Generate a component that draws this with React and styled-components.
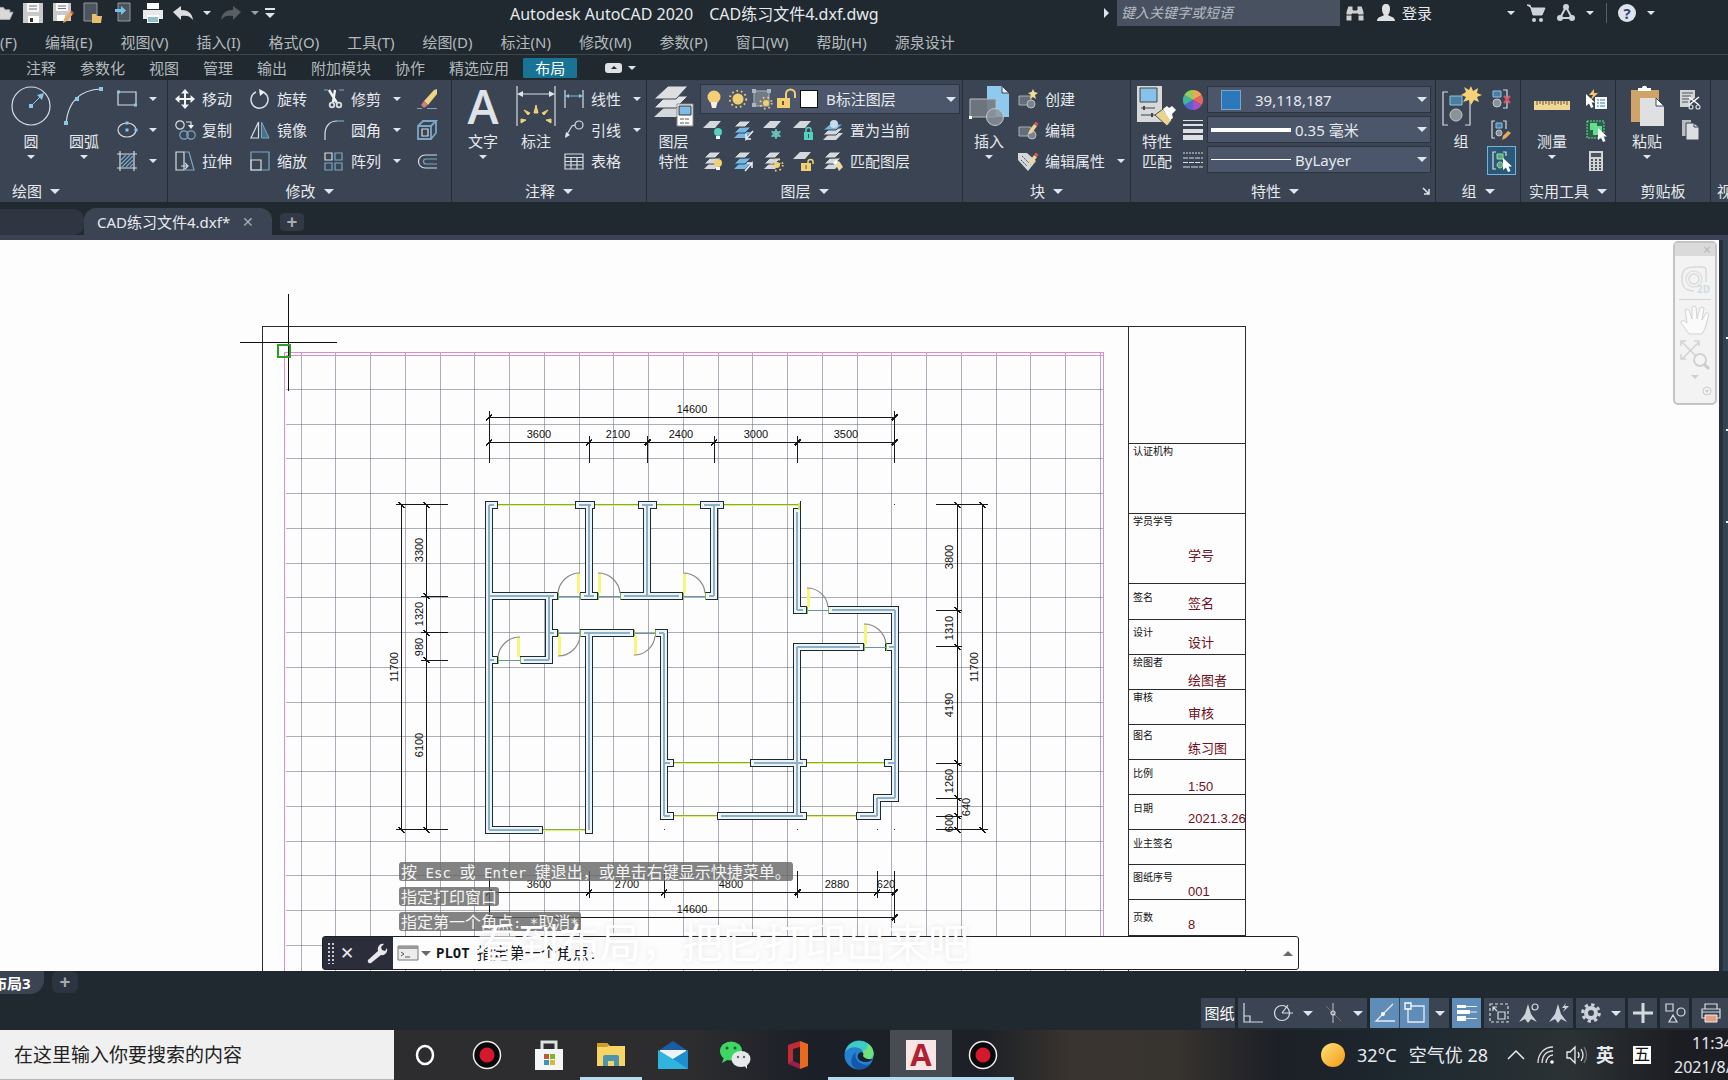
import styled, { createGlobalStyle } from "styled-components";

const App = () => {
  return (
    <Page>
      <GlobalStyle />
      <TitleBar />
      <MenuBar>
        {menus.map((item) => (
          <MenuItem key={item}>{item}</MenuItem>
        ))}
      </MenuBar>
      <RibbonTabs />
      <Ribbon />
      <FileTabs />
      <Workspace />
      <LayoutTabs />
      <StatusBar />
      <Taskbar />
    </Page>
  );
};

export default App;

//Data
const menus = [
  "(F)",
  "编辑(E)",
  "视图(V)",
  "插入(I)",
  "格式(O)",
  "工具(T)",
  "绘图(D)",
  "标注(N)",
  "修改(M)",
  "参数(P)",
  "窗口(W)",
  "帮助(H)",
  "源泉设计",
];

const ribbonTabs = [
  "注释",
  "参数化",
  "视图",
  "管理",
  "输出",
  "附加模块",
  "协作",
  "精选应用",
  "布局",
];

const titleRows = [
  { label: "认证机构", labelY: 455, bottom: 513 },
  { label: "学员学号", labelY: 525, value: "学号", valueY: 560, bottom: 583 },
  { label: "签名", labelY: 601, value: "签名", valueY: 608, bottom: 619 },
  { label: "设计", labelY: 636, value: "设计", valueY: 647, bottom: 654 },
  { label: "绘图者", labelY: 666, value: "绘图者", valueY: 685, bottom: 689 },
  { label: "审核", labelY: 701, value: "审核", valueY: 718, bottom: 724 },
  { label: "图名", labelY: 739, value: "练习图", valueY: 753, bottom: 759 },
  { label: "比例", labelY: 777, value: "1:50", valueY: 791, bottom: 794 },
  { label: "日期", labelY: 812, value: "2021.3.26", valueY: 823, bottom: 829 },
  { label: "业主签名", labelY: 847, bottom: 864 },
  { label: "图纸序号", labelY: 881, value: "001", valueY: 896, bottom: 899 },
  { label: "页数", labelY: 921, value: "8", valueY: 929, bottom: 935 },
];

// wall centre lines: x1, y1, x2, y2
const walls = [
  [489, 505, 494, 505],
  [579, 505, 591, 505],
  [642, 505, 653, 505],
  [704, 505, 720, 505],
  [489, 505, 489, 830],
  [589, 505, 589, 596],
  [647, 505, 647, 596],
  [714, 505, 714, 596],
  [797, 512, 797, 610],
  [489, 596, 554, 596],
  [584, 596, 594, 596],
  [624, 596, 679, 596],
  [709, 596, 714, 596],
  [549, 596, 549, 660],
  [489, 660, 494, 660],
  [524, 660, 549, 660],
  [549, 633, 554, 633],
  [584, 633, 630, 633],
  [659, 633, 664, 633],
  [589, 633, 589, 830],
  [664, 633, 664, 816],
  [664, 763, 670, 763],
  [754, 763, 803, 763],
  [888, 763, 895, 763],
  [664, 816, 670, 816],
  [721, 816, 803, 816],
  [860, 816, 877, 816],
  [797, 647, 797, 816],
  [797, 610, 803, 610],
  [832, 610, 895, 610],
  [895, 610, 895, 798],
  [797, 647, 860, 647],
  [889, 647, 895, 647],
  [877, 798, 895, 798],
  [877, 798, 877, 816],
  [489, 830, 539, 830],
];

const wallWindows = [
  [498, 505, 575],
  [595, 505, 638],
  [657, 505, 700],
  [724, 505, 798],
  [674, 763, 750],
  [807, 763, 884],
  [674, 816, 717],
  [807, 816, 856],
  [543, 830, 586],
];

// opening left, opening right, wall y, hinge side, swing direction
const doors = [
  [558, 580, 596, "right", -1],
  [598, 620, 596, "left", -1],
  [683, 705, 596, "left", -1],
  [807, 828, 610, "left", -1],
  [864, 886, 647, "left", -1],
  [498, 520, 660, "right", -1],
  [558, 580, 633, "left", 1],
  [634, 655, 633, "left", 1],
];

const horizontalTexts = [
  ["14600", 692, 413],
  ["3600", 539, 438],
  ["2100", 618, 438],
  ["2400", 681, 438],
  ["3000", 756, 438],
  ["3500", 846, 438],
  ["3600", 539, 888],
  ["2700", 627, 888],
  ["4800", 731, 888],
  ["2880", 837, 888],
  ["620", 886, 888],
  ["14600", 692, 913],
];

const verticalTexts = [
  ["3300", 423, 550],
  ["1320", 423, 614],
  ["980", 423, 647],
  ["6100", 423, 745],
  ["11700", 398, 667],
  ["3800", 953, 557],
  ["1310", 953, 628],
  ["4190", 953, 705],
  ["1260", 953, 781],
  ["640", 970, 807],
  ["600", 953, 823],
  ["11700", 978, 667],
];

const range = (start, count) =>
  Array.from({ length: count }, (_, i) => start + i * 34.75);

//Icons
const sheet = (y, fill = "#d5d9dd") => (
  <path d={`M7 ${y}H18L12 ${y + 6}H1Z`} fill={fill} />
);
const stack = (fill) => (
  <>
    {sheet(12, fill)}
    <path d="M7 7H18L12 13H1Z" fill={fill || "#d5d9dd"} stroke="#3b4452" />
    <path d="M7 1H18L12 7H1Z" fill="#d5d9dd" stroke="#3b4452" />
  </>
);
const bulb = (fill) => (
  <>
    <circle cx="15" cy="12" r="4" fill={fill} />
    <path d="M13 16h4v3h-4z" fill="#f2f4f5" />
  </>
);
const sun = (cx, cy, r, fill = "#f3cf73") => (
  <>
    <circle cx={cx} cy={cy} r={r} fill={fill} />
    <circle
      cx={cx}
      cy={cy}
      r={r + 2.7}
      fill="none"
      stroke={fill}
      strokeWidth="1.8"
      strokeDasharray="1.6 3"
    />
  </>
);
const pencil = (
  <>
    <path d="M11 11L16 4l3 2-5 7-3 1z" fill="#eed49a" />
    <path d="M16 4l1.500-2.500 3 2L19 6z" fill="#d4564e" />
  </>
);
const pointer = "M0 0V12L3 9.500 5 14 7.500 13 5.500 8.500H9Z";
const ln = { fill: "none", stroke: "#d5dce3", strokeWidth: 1.2 };
const blue = { fill: "none", stroke: "#7aa7c7", strokeWidth: 1.2 };
const dot = (x, y) => (
  <rect x={x - 1.5} y={y - 1.5} width="3" height="3" fill="#8cc4ea" />
);

const glyphs = {
  folder: (
    <path d="M0 3h8l2 3h6v3h4l-4 9H0z" fill="#d9d9d9" stroke="#b4b4b4" />
  ),
  save: (
    <>
      <path d="M0 0h20v20H0z" fill="#c9c9c9" />
      <path d="M4 0h12v9H4z" fill="#f7f7f7" />
      <path d="M6 3h8M6 6h8" stroke="#777" />
      <path d="M5 13h11v7H5z" fill="#fff" />
      <path d="M7 15h3v4H7z" fill="#333" />
    </>
  ),
  saveAs: (
    <>
      <path d="M0 0h18v18H0z" fill="#c9c9c9" />
      <path d="M3 0h12v8H3z" fill="#f7f7f7" />
      <path d="M5 3h8M5 5.500h8" stroke="#777" />
      <path d="M4 12h8v6H4z" fill="#fff" />
      <path d="M10 20l1-4 6-7 3 2-6 7z" fill="#e9a961" />
      <path d="M17 9l1.500-1.500L21 10l-1 1z" fill="#d4564e" />
    </>
  ),
  openFile: (
    <>
      <path d="M1 0h13v18H1z" fill="#4d555c" stroke="#93999e" />
      <path d="M9 11h4l1 2h5l-1 7H9z" fill="#e8bf6c" />
    </>
  ),
  importFile: (
    <>
      <path d="M5 0h12v18H5z" fill="#4d555c" stroke="#93999e" />
      <path d="M2 6h6V3l5 4.500L8 12V9H2z" fill="#7cc0ec" />
    </>
  ),
  printer: (
    <>
      <path d="M4 0h12v6H4z" fill="#fff" />
      <path d="M0 7h20v9H0z" fill="#e9e9e9" />
      <path d="M4 12h12v8H4z" fill="#fff" />
      <path d="M5 14h10v5H5z" fill="#90bfcb" />
    </>
  ),
  undo: <path d="M0 9L8 3v4c7 0 11 3 12 10-3-4-6-5-12-4v4z" fill="#dcdee0" />,
  redo: <path d="M20 9L12 3v4C5 7 1 10 0 17c3-4 6-5 12-4v4z" fill="#575e64" />,
  binoculars: (
    <path
      d="M3 3h5v4h4V3h5l2 6v9h-6v-7H7v7H1V9zM1 12h6M13 12h6"
      fill="#cdd0d2"
      stroke="#20292f"
    />
  ),
  user: (
    <path
      d="M10 1c3 0 4 2 4 5s-1 5-2 6c3 2 7 2 7 6H1c0-4 4-4 7-6-1-1-2-3-2-6s1-5 4-5z"
      fill="#e0e1e3"
    />
  ),
  cart: (
    <>
      <path d="M1 2h3l3 10h9l3-7H6z" fill="#cdd2df" stroke="#cdd2df" />
      <circle cx="8" cy="17" r="2" fill="#cdd2df" />
      <circle cx="15" cy="17" r="2" fill="#cdd2df" />
    </>
  ),
  share: (
    <>
      <path d="M10 4L4 15h12z" fill="none" stroke="#cdd2df" strokeWidth="2" />
      <circle cx="10" cy="4" r="3" fill="#cdd2df" />
      <circle cx="4" cy="15" r="3" fill="#cdd2df" />
      <circle cx="16" cy="15" r="3" fill="#cdd2df" />
    </>
  ),
  circle: (
    <>
      <circle cx="20" cy="20" r="19" {...ln} />
      <path d="M20 20L31 9" stroke="#8cc4ea" />
      <path d="M33 7l-2 7-5-5z" fill="#8cc4ea" />
      <rect x="18" y="18" width="4" height="4" fill="#8cc4ea" />
    </>
  ),
  arc: (
    <>
      <path d="M2 37C4 18 14 4 37 3" {...ln} />
      <rect x="0" y="35" width="4" height="4" fill="#8cc4ea" />
      <rect x="11" y="11" width="4" height="4" fill="#8cc4ea" />
      <rect x="35" y="1" width="4" height="4" fill="#8cc4ea" />
    </>
  ),
  rect: (
    <>
      <path d="M1 3h18v13H1z" {...ln} />
      {dot(1.5, 3)}
      {dot(18.5, 16)}
    </>
  ),
  ellipse: (
    <>
      <ellipse cx="10" cy="10" rx="9" ry="7" {...ln} />
      {dot(10, 10)}
      {dot(19, 10)}
      {dot(10, 3)}
    </>
  ),
  hatch: (
    <>
      <path d="M3 0v20M17 0v20M0 3h20M0 17h20" {...ln} />
      <path d="M4 9l5-5M4 13l9-9M5 16L16 5M9 16l7-7M13 16l3-3" {...blue} />
    </>
  ),
  move: (
    <path
      d="M10 0l4 4.500h-3V9h4.500V6L20 10l-4.500 4v-3H11v4.500h3L10 20l-4-4.500h3V11H4.500v3L0 10l4.500-4v3H9V4.500H6z"
      fill="#f0f3f6"
    />
  ),
  rotate: (
    <>
      <path d="M14 3.500A8.500 8.500 0 1 1 6 3" {...ln} strokeWidth="1.5" />
      <path d="M9 0l6 3-5 4z" fill="#f0f3f6" />
    </>
  ),
  trim: (
    <>
      <path d="M0 1h4M15 1h5" {...blue} />
      <path d="M5 1l8 13M11 1L9 13" stroke="#f0f3f6" strokeWidth="2.400" />
      <circle cx="15" cy="16" r="2.300" {...ln} strokeWidth="1.800" />
      <circle cx="8" cy="16" r="2.300" {...ln} strokeWidth="1.800" />
    </>
  ),
  erase: (
    <>
      <path d="M0 19.500h5M10 19.500h10" {...blue} />
      <path d="M7 12L17 1l3-1v5L11 16z" fill="#f0d385" />
      <path d="M7 12l4 4-4 3-3-3z" fill="#d97880" />
    </>
  ),
  copy: (
    <>
      <circle cx="5" cy="5" r="4.200" {...ln} />
      <circle cx="9" cy="15" r="4.200" {...blue} />
      <circle cx="16" cy="15" r="4.200" {...blue} />
      <path d="M11 2h5v4" {...ln} />
      <path d="M13 5h6l-3 4z" fill="#f0f3f6" />
    </>
  ),
  mirror: (
    <>
      <path d="M8.500 2v16H1z" {...ln} />
      <path d="M11.500 2v16H19z" fill="#477089" stroke="#7aa7c7" />
    </>
  ),
  fillet: (
    <>
      <path d="M1 20v-6C1 6 6 1 13 1" {...ln} />
      <path d="M13 1h7" {...blue} />
    </>
  ),
  explode: (
    <>
      <path d="M1 6h13v13H1zM1 6l5-5h13l-5 5M19 1v12l-5 6" {...blue} strokeWidth="1.8" />
      <path d="M5 9h6v7H5z" {...ln} />
    </>
  ),
  stretch: (
    <>
      <path d="M1 1h8v18H1z" {...ln} />
      <path d="M9 1h5l5 18H9" {...blue} />
      <path d="M6 15h6M10 12l3 3-3 3" {...ln} />
    </>
  ),
  scale: (
    <>
      <path d="M1 1h18v18H1z" {...blue} />
      <path d="M1 9h10v10H1z" {...ln} />
    </>
  ),
  array: (
    <>
      <path d="M1 2h7v7H1z" {...ln} />
      <path d="M11 2h7v7h-7zM1 12h7v7H1zM11 12h7v7h-7z" {...blue} />
    </>
  ),
  offset: (
    <>
      <path d="M20 4H8a6 6 0 0 0 0 13h12" {...ln} />
      <path d="M20 8H9a2.500 2.500 0 0 0 0 5h11" {...blue} />
    </>
  ),
  letterA: (
    <text x="20" y="38" fontSize="47" fontFamily="Open Sans" fontWeight="600" textAnchor="middle" fill="#dfe3e8">
      A
    </text>
  ),
  dimension: (
    <>
      <path d="M1 0v40M39 0v40M3 8h34" {...ln} />
      <path d="M1 8l6-3v6zM39 8l-6-3v6z" fill="#e0e5ea" />
      <path d="M18 27l2-8 2 8zM12 29l-4-5 6 3zM28 29l4-5-6 3zM10 34l-5-1v4zM30 34l5-1v4z" fill="#edd27b" stroke="#edd27b" />
    </>
  ),
  linear: (
    <>
      <path d="M1 1v18M19 1v18" {...ln} />
      <path d="M3 7h14" {...blue} />
      <path d="M1 7l4-2v4zM19 7l-4-2v4z" fill="#8cc4ea" />
    </>
  ),
  leader: (
    <>
      <circle cx="15" cy="5" r="4" {...ln} />
      <path d="M11 5L8 6 2 16" {...ln} />
      <path d="M1 18l1-6 4 3z" fill="#e0e5ea" />
    </>
  ),
  table: <path d="M1 3h18v15H1zM1 6.500h18M1 10.500h18M1 14h18M7 6v12M13 6v12" {...ln} />,
  layers: (
    <>
      <path d="M12 20h22L22 31H0z" fill="#d5d8db" />
      <path d="M12 10h22L22 22H0z" fill="#e0e2e4" stroke="#3b4452" />
      <path d="M14 0h20L22 13H0z" fill="#dcdee0" stroke="#3b4452" />
      <path d="M23 18h16v22H23z" fill="#fff" stroke="#888" />
      <path d="M25 20h12v9H25z" fill="#80bce8" stroke="#333" />
      <path d="M26 33h10M26 37h10" stroke="#555" strokeDasharray="4 1" />
    </>
  ),
  bulb: (
    <>
      <circle cx="10" cy="8" r="6.500" fill="#f5cf76" />
      <path d="M6.500 13h7l-1.500 6h-4z" fill="#f6f1e4" />
    </>
  ),
  sun: sun(10, 10, 5.5),
  vpFreeze: (
    <>
      <path d="M2 2h15v15H2z" fill="#717b88" stroke="#adb4bc" />
      <path d="M0 0h4v4H0zM15 0h4v4h-4zM0 14h4v4H0z" fill="#adb4bc" />
      {sun(14, 14, 3)}
    </>
  ),
  unlock: (
    <>
      <path d="M10 10V5a4 4 0 0 1 9 0v4" fill="none" stroke="#f3cf73" strokeWidth="2" />
      <path d="M1 9h13v10H1z" fill="#f3cf73" />
      <path d="M7 12v4" stroke="#6c5a2a" strokeWidth="2" />
    </>
  ),
  layerOff: (
    <>
      <path d="M7 1h11l-6 7H0z" fill="#d5d9dd" />
      {bulb("#54cfc0")}
    </>
  ),
  layerIso: (
    <>
      {stack("#77b7e4")}
      <path d="M20 11l-7 8v-5M13 19h5" fill="none" stroke="#f0f3f6" strokeWidth="1.500" />
    </>
  ),
  layerFreeze: (
    <>
      <path d="M7 1h11l-6 7H0z" fill="#d5d9dd" />
      <path d="M13 9v10M8.500 11.500l9 5M17.500 11.500l-9 5" stroke="#6dc9c0" strokeWidth="1.500" />
      <circle cx="13" cy="14" r="3" fill="none" stroke="#6dc9c0" />
    </>
  ),
  layerLock: (
    <>
      <path d="M7 1h11l-6 7H0z" fill="#d5d9dd" />
      <path d="M13 13v-3a2.500 2.500 0 0 1 5 0v3" fill="none" stroke="#54cfc0" strokeWidth="1.500" />
      <path d="M11 12h9v8h-9z" fill="#54cfc0" />
      <path d="M15.500 14v4" stroke="#245c56" />
    </>
  ),
  layerCurrent: (
    <>
      <path d="M7 13h13l-7 7H0z" fill="#d5d9dd" />
      <path d="M7 8h13l-7 7H0z" fill="#d5d9dd" stroke="#3b4452" />
      <path d="M7 4h13l-7 6H0z" fill="#77b7e4" stroke="#3b4452" />
      <circle cx="11" cy="4" r="4" fill="#c8dbe8" />
    </>
  ),
  layerOn: (
    <>
      {stack()}
      {bulb("#f3cf73")}
    </>
  ),
  layerUniso: (
    <>
      {stack("#77b7e4")}
      <path d="M12 20l7-8v5M19 12h-5" fill="none" stroke="#f0f3f6" strokeWidth="1.500" />
    </>
  ),
  layerThaw: (
    <>
      {stack()}
      {sun(14, 14, 3)}
    </>
  ),
  layerUnlock: (
    <>
      <path d="M7 1h11l-6 7H0z" fill="#d5d9dd" />
      <path d="M15 13v-2a2.300 2.300 0 0 1 5 0v2" fill="none" stroke="#f3cf73" strokeWidth="1.500" />
      <path d="M8 12h10v8H8z" fill="#f3cf73" />
      <path d="M13 14v4" stroke="#6c5a2a" />
    </>
  ),
  layerMatch: (
    <>
      {stack()}
      <path d="M12 12l4-2 4 6-4 4z" fill="#ecd9a0" />
      <path d="M10 12l3-3 2 2-3 3z" fill="#fff" />
    </>
  ),
  insert: (
    <>
      <path d="M18 0h15l7 7v24H18z" fill="#8fcaee" />
      <path d="M33 0v7h7z" fill="#e4f3fc" stroke="#3b4452" />
      <path d="M1 13h26v18H1z" fill="#737a83" fillOpacity=".9" stroke="#b7bcc2" />
      <circle cx="26" cy="31" r="8.500" fill="#8c949c" fillOpacity=".8" stroke="#c3c8cd" />
      <path d="M0 30h3v3H0z" fill="#fff" />
    </>
  ),
  blockCreate: (
    <>
      <path d="M1 7h12v9H1z" fill="#656d78" stroke="#a8afb8" />
      <circle cx="13" cy="15" r="4" fill="#7b838d" stroke="#b9bfc6" />
      <path d="M15 0l1.500 3L20 4l-3 2 1 4-3-2-3 2 1-4-3-2 3.500-1z" fill="#f3dc96" />
    </>
  ),
  blockEdit: (
    <>
      <path d="M1 7h12v9H1z" fill="#656d78" stroke="#a8afb8" />
      <circle cx="14" cy="15" r="4" fill="#7b838d" stroke="#b9bfc6" />
      {pencil}
    </>
  ),
  attrEdit: (
    <>
      <path d="M0 2h9l9 8-8 10L0 9z" fill="#d5d8db" />
      <path d="M4 5l9 9M3 9l6 6" stroke="#4a525e" strokeDasharray="2 1" />
      {pencil}
    </>
  ),
  matchProps: (
    <>
      <path d="M0 0h25v36H0z" fill="#d6d8d9" />
      <path d="M3 2h17v14H3z" fill="#87c2ea" stroke="#444" />
      <path d="M4 22h14M4 29h14" stroke="#444" />
      <path d="M7 20v4M15 27v4" stroke="#444" strokeWidth="2" />
      <path d="M18 29l8-6 9 11-5 6z" fill="#ead58f" stroke="#4a4f55" />
      <path d="M26 23l4-3 2 2 3-2 4 4-4 4 1 4-3 2z" fill="#fff" />
    </>
  ),
  wheel: (
    <>
      <path d="M10 10L10 0A10 10 0 0 1 18.700 5z" fill="#f0a35a" />
      <path d="M10 10L18.700 5A10 10 0 0 1 18.700 15z" fill="#e2675f" />
      <path d="M10 10L18.700 15A10 10 0 0 1 10 20z" fill="#a84fc4" />
      <path d="M10 10L10 20A10 10 0 0 1 1.300 15z" fill="#5562d0" />
      <path d="M10 10L1.300 15A10 10 0 0 1 1.300 5z" fill="#3fb59b" />
      <path d="M10 10L1.300 5A10 10 0 0 1 10 0z" fill="#8ed05c" />
    </>
  ),
  weights: (
    <path d="M0 0h20v1H0zM0 4h20v2H0zM0 9h20v4H0zM0 15h20v5H0z" fill="#dde1e5" />
  ),
  lineTypes: (
    <>
      <path d="M0 3h20" {...ln} strokeDasharray="2 1" />
      <path d="M0 8h20M0 12.500h20" {...ln} strokeDasharray="5 1" />
      <path d="M0 17h20" {...ln} strokeDasharray="7 1" />
    </>
  ),
  launcher: <path d="M2 2l6 6M8 3v5H3" fill="none" stroke="#dfe5ef" strokeWidth="1.500" />,
  group: (
    <>
      <path d="M7 6H2v33h5M24 39h5V14" {...ln} />
      <path d="M9 10h12v9H9z" fill="#4c7c9e" stroke="#8cc4ea" />
      <circle cx="15" cy="29" r="6" fill="#8c9299" stroke="#c3c8cd" />
      <path d="M30 0l2 5 5-3-1 5 5 2-5 2 2 5-5-2-3 5-2-5-6 2 3-5-5-2 5-3-2-5 5 3z" fill="#f5d27a" />
    </>
  ),
  ungroup: (
    <>
      <path d="M12 1h4v18h-4" {...ln} />
      <path d="M2 2h8v6H2z" fill="#4c7c9e" stroke="#8cc4ea" />
      <circle cx="6" cy="14" r="4" fill="#8c9299" stroke="#c3c8cd" />
      <path d="M13 7l6 7M19 7l-6 7" stroke="#dd5468" strokeWidth="2" />
    </>
  ),
  groupEdit: (
    <>
      <path d="M4 1H1v17h3M12 1h3v8" {...ln} />
      <path d="M5 3h6v5H5z" fill="#4c7c9e" stroke="#8cc4ea" />
      <circle cx="8" cy="13" r="3" fill="#8c9299" stroke="#c3c8cd" />
      <path d="M11 20l1-4 5-5 3 2-5 5z" fill="#e9a961" />
    </>
  ),
  groupSelect: (
    <>
      <path d="M4 1H1v17h3M11 1h3v4" {...ln} />
      <path d="M5 3h6v5H5zM8 11a3 3 0 1 0 .1 0z" fill="#5da678" stroke="#8fe0a8" />
      <path d={pointer} transform="translate(11 7)" fill="#fff" />
    </>
  ),
  ruler: (
    <>
      <path d="M2 15h36v9H2z" fill="#f0d594" />
      <path d="M5 15v4M8 15v3M11 15v4M14 15v3M17 15v4M20 15v3M23 15v4M26 15v3M29 15v4M32 15v3M35 15v4" stroke="#5d5538" />
    </>
  ),
  quickSelect: (
    <>
      <path d="M8 0L3 6h4l-3 6 8-8H8z" fill="#f3c66c" />
      <path d="M9 8h12v12H9z" fill="#f4f9fd" />
      <path d="M11 11h2M14 11h5M11 14h2M14 14h5M11 17h2M14 17h5" stroke="#3f78a5" />
      <path d={pointer} transform="translate(0 5)" fill="#fff" />
    </>
  ),
  selectAll: (
    <>
      <path d="M1 1h17v17H1z" fill="#2f5f4c" stroke="#63df8b" strokeDasharray="2 1" />
      <path d="M4 3h7v7H4zM7 6h9v9H7z" fill="#63df8b" />
      <path d={pointer} transform="translate(12 8)" fill="#fff" />
    </>
  ),
  calculator: (
    <>
      <path d="M3 0h14v20H3z" fill="#d3d4d5" />
      <path d="M5 2h10v4H5z" fill="#4d545c" />
      <path d="M5 9h2M9 9h2M13 9h2M5 12h2M9 12h2M13 12h2M5 15h2M9 15h2M13 15h2M5 18h2M9 18h2M13 18h2" stroke="#4d545c" strokeWidth="2" />
    </>
  ),
  paste: (
    <>
      <path d="M4 4h28v32H4z" fill="#d0a36b" />
      <path d="M11 5V2h4c0-3 5-3 5 0h4v3z" fill="#fff" />
      <path d="M13 12h16l8 8v20H13z" fill="#dfe0e2" />
      <path d="M29 12v8h8z" fill="#fff" stroke="#3b4452" />
    </>
  ),
  cut: (
    <>
      <path d="M0 1h15v8l-5 3v6H0z" fill="#d3d4d5" />
      <path d="M2 4h11M2 7h9M2 10h7M2 13h6" stroke="#4d545c" />
      <path d="M9 8l10 8M19 8L9 16" stroke="#fff" strokeWidth="1.500" />
      <circle cx="11" cy="18" r="2" {...ln} />
      <circle cx="18" cy="18" r="2" {...ln} />
    </>
  ),
  clipCopy: (
    <>
      <path d="M2 0h9v16H2z" fill="#b9bcc0" />
      <path d="M6 3h8l5 4v13H6z" fill="#dcdee0" stroke="#3b4452" />
      <path d="M14 3v4h5" fill="none" stroke="#3b4452" />
    </>
  ),
  wrench: (
    <path
      d="M1 17L11 8c-1-4 2-8 6-7l-3 3 1 3 3 1 2-3c1 4-2 8-6 7L4 20c-2 1-4-1-3-3z"
      fill="#e8e8ec"
    />
  ),
  prompt: (
    <>
      <path d="M0 3h20v14H0z" fill="#ececec" stroke="#777" />
      <path d="M0 3h20v3H0z" fill="#999" />
      <path d="M3 9l3 2-3 2M7 14h5" fill="none" stroke="#555" />
    </>
  ),
  ortho: <path d="M1 0v19h19M1 13h6v6" {...ln} />,
  polar: (
    <>
      <circle cx="9" cy="10" r="7.500" {...ln} />
      <path d="M9 10h11M9 10l6-8" {...ln} />
    </>
  ),
  iso: (
    <>
      <path d="M10 0v20" {...ln} stroke="#a9b0b8" />
      <path d="M3 3l6 6M12 12l6 6" stroke="#9c5f66" />
      <circle cx="10" cy="10" r="2" {...ln} />
    </>
  ),
  track: (
    <>
      <path d="M18 1L1 18h19" fill="none" stroke="#e5edf5" strokeWidth="1.300" />
      <circle cx="8" cy="11" r="2" fill="#fff" />
    </>
  ),
  osnap: (
    <>
      <path d="M3 3h16v16H3z" fill="none" stroke="#e5edf5" strokeWidth="1.300" />
      <path d="M0 0h6v6H0z" fill="#5f8db8" stroke="#fff" strokeWidth="1.300" />
    </>
  ),
  lineweight: (
    <>
      <path d="M0 2h9v3H0zM0 7h13v4H0zM0 13h9v5H0z" fill="#fff" />
      <path d="M9 3.500h11M13 9h7M9 15.500h11" stroke="#e5edf5" />
    </>
  ),
  annoScale: (
    <>
      <path d="M1 1h18v18H1z" {...ln} strokeDasharray="3 2" />
      <path d="M9 9h7v7H9zM4 4l4 4M4 8V4h4" {...ln} />
    </>
  ),
  annoShow: (
    <>
      <path d="M9 1l3 10 6 8-6-3-3 4-3-4-6 3 6-8z" fill="#ccd2da" />
      <circle cx="16" cy="4" r="3" {...ln} />
    </>
  ),
  annoAuto: (
    <>
      <path d="M9 1l3 10 6 8-6-3-3 4-3-4-6 3 6-8z" fill="#ccd2da" />
      <path d="M17 0l-4 5h3l-2 4 6-6h-4z" fill="#ccd2da" />
    </>
  ),
  gear: (
    <>
      <circle cx="10" cy="10" r="5" fill="none" stroke="#ccd2da" strokeWidth="4" />
      <circle cx="10" cy="10" r="8.300" fill="none" stroke="#ccd2da" strokeWidth="3" strokeDasharray="3.300 3.200" />
    </>
  ),
  plus: <path d="M8.500 0h3v8.500H20v3h-8.500V20h-3v-8.500H0v-3h8.500z" fill="#d5dae0" />,
  isolate: (
    <>
      <path d="M1 1h7v7H1zM8 12l4 7H4z" {...ln} />
      <circle cx="16" cy="9" r="4" {...ln} />
    </>
  ),
  plot: (
    <>
      <path d="M4 6V1h12v5M1 6h18v9H1zM1 9h18" {...ln} />
      <path d="M4 12h12v7H4z" fill="#e0a084" stroke="#eee" />
    </>
  ),
  cortana: <ellipse cx="15" cy="15" rx="8" ry="9" fill="none" stroke="#fff" strokeWidth="2.500" />,
  record: (
    <>
      <circle cx="15" cy="15" r="13.500" fill="#090909" stroke="#eee" strokeWidth="1.500" />
      <circle cx="15" cy="15" r="7.500" fill="#d5182c" />
    </>
  ),
  store: (
    <>
      <path d="M8 10V2h14v8" fill="none" stroke="#dbe2e0" strokeWidth="3" />
      <path d="M1 9h28v21H1z" fill="#f4f5f5" />
      <path d="M10 14h5v5h-5z" fill="#c1582f" />
      <path d="M16 14h5v5h-5z" fill="#7db434" />
      <path d="M10 20h5v5h-5z" fill="#3a95bd" />
      <path d="M16 20h5v5h-5z" fill="#e0b636" />
    </>
  ),
  explorer: (
    <>
      <path d="M1 3h10l3 3h15v20H1z" fill="#f6d465" />
      <path d="M1 3h10l2 3-2 1H1z" fill="#cf9d27" />
      <path d="M7 26V17q0-2 2-2h12q2 0 2 2v9h-5v-5h-6v5z" fill="#4d95ad" />
    </>
  ),
  mail: (
    <>
      <path d="M0 11L15 1l15 10v5H0z" fill="#1b5ca4" />
      <path d="M2 10h26v9H2z" fill="#eef3f7" />
      <path d="M0 10l15 9 15-9v19H0z" fill="#31b3e0" />
      <path d="M30 10L15 19l15 10z" fill="#1d8ed0" />
    </>
  ),
  wechat: (
    <>
      <ellipse cx="11" cy="11" rx="11" ry="9.500" fill="#3fd763" />
      <path d="M4 17l-2 6 7-4z" fill="#3fd763" />
      <ellipse cx="21" cy="19" rx="9.500" ry="8" fill="#e8e8ea" />
      <path d="M24 25l3 4v-6z" fill="#e8e8ea" />
      <circle cx="7" cy="8" r="1.500" fill="#1c5e2c" />
      <circle cx="15" cy="8" r="1.500" fill="#1c5e2c" />
      <circle cx="18" cy="17" r="1.200" fill="#666" />
      <circle cx="24" cy="17" r="1.200" fill="#666" />
    </>
  ),
  office: (
    <>
      <path d="M18 1l8 3v22l-8 3z" fill="#e96a1f" />
      <path d="M18 1L6 5v19l5-3V9l7-2z" fill="#c22b35" />
      <path d="M6 24l12 5v-5l-7-3z" fill="#962052" />
    </>
  ),
  edge: (
    <>
      <circle cx="15" cy="15" r="14.500" fill="#2581d2" />
      <path d="M1 12C4 2 14-2 23 3c7 4 8 12 5 15-3 3-8 2-10 0 2-4 1-8-3-10C9 6 4 8 1 12z" fill="#3ecbc1" />
      <path d="M23 3c7 4 8 12 5 15-3 3-8 2-10 0 2-4 2-5 1-7 3-1 6-4 4-8z" fill="#72e07a" />
      <path d="M12 12c-2 5 1 12 10 13 2 0 4-1 5-2-3 5-9 7-14 6C6 27 5 18 12 12z" fill="#1557a8" />
      <path d="M18 12c-5 0-6 7-1 9 5 2 9 1 12-2-5 1-9-1-10-3 1-2 0-3-1-4z" fill="#152236" />
    </>
  ),
  autocad: (
    <>
      <path d="M0 0h30v30H0z" fill="#f8e6e4" />
      <text x="15" y="26" fontSize="31" fontFamily="Open Sans" fontWeight="700" textAnchor="middle" fill="#b02136">
        A
      </text>
    </>
  ),
  weather: (
    <>
      <defs>
        <linearGradient id="sunFill" x1="0" y1="0" x2="1" y2="1">
          <stop offset="0" stopColor="#ffe07a" />
          <stop offset="1" stopColor="#f59a12" />
        </linearGradient>
      </defs>
      <circle cx="12" cy="12" r="12" fill="url(#sunFill)" />
    </>
  ),
  chevron: <path d="M2 14l8-8 8 8" fill="none" stroke="#eee" strokeWidth="1.500" />,
  wifi: (
    <>
      <path d="M2 18C2 9 8 2 17 2M6 18C6 11 10 6 17 6M10 18c0-4 3-8 7-8" fill="none" stroke="#ddd" strokeWidth="1.300" />
      <circle cx="16" cy="17" r="1.800" fill="#fff" />
    </>
  ),
  volume: (
    <>
      <path d="M1 7h3l5-5v16l-5-5H1z" fill="none" stroke="#eee" strokeWidth="1.300" />
      <path d="M12 7q2 3 0 6M15 4q4 6 0 12" fill="none" stroke="#eee" strokeWidth="1.300" />
      <path d="M18 2q5 8 0 16" fill="none" stroke="#777" strokeWidth="1.300" />
    </>
  ),
  steering: (
    <>
      <path d="M14 1C3 1 1 5 1 13s3 12 12 12M14 1h8q3 0 3 3v12" fill="none" stroke="#d9dada" strokeWidth="1.500" />
      <circle cx="13" cy="13" r="8" fill="none" stroke="#e0e0e0" strokeWidth="1.500" />
      <circle cx="13" cy="13" r="5" fill="none" stroke="#d9dada" strokeWidth="1.500" />
      <text x="16" y="27" fontSize="10" fontFamily="Open Sans" fontWeight="700" fill="#cfdde0">
        2D
      </text>
    </>
  ),
  pan: (
    <path
      d="M9 29C6 24 1 19 1 17s3-2 6 1L5 5q2-2 4 0l3 9 0-12q2-2 4 0l1 12 3-11q2-2 4 0l-2 12 4-7q2-1 3 1c-2 6-3 15-7 20z"
      fill="#fafafa"
      stroke="#d2d2d2"
    />
  ),
  zoom: (
    <>
      <path d="M2 2l17 17M19 2L2 19M1 6V1h5M14 1h5v5M1 14v5h5" fill="none" stroke="#d2d2d2" strokeWidth="1.500" />
      <circle cx="20" cy="20" r="6" fill="#f4f4f4" stroke="#d2d2d2" strokeWidth="2" />
      <path d="M24 24l5 5" stroke="#cccccc" strokeWidth="3" />
    </>
  ),
  navOptions: (
    <>
      <circle cx="5" cy="5" r="4" fill="none" stroke="#cccccc" />
      <path d="M3 4h4l-2 3z" fill="#cccccc" />
    </>
  ),
};

const Icon = ({ name, size = 20, box }) => (
  <Svg $size={size} viewBox={`0 0 ${box || size} ${box || size}`} aria-hidden="true">
    {glyphs[name]}
  </Svg>
);

//Sections
const TitleBar = () => (
  <TitleRow>
    <QuickAccess>
      <IconButton aria-label="打开"><Icon name="folder" size={16} box={20} /></IconButton>
      <IconButton aria-label="保存"><Icon name="save" /></IconButton>
      <IconButton aria-label="另存为"><Icon name="saveAs" /></IconButton>
      <IconButton aria-label="打开文件"><Icon name="openFile" /></IconButton>
      <IconButton aria-label="输入"><Icon name="importFile" /></IconButton>
      <IconButton aria-label="打印"><Icon name="printer" /></IconButton>
      <IconButton aria-label="放弃"><Icon name="undo" /></IconButton>
      <Caret />
      <IconButton aria-label="重做"><Icon name="redo" /></IconButton>
      <Caret $dim />
      <CustomizeCaret><Caret $large /></CustomizeCaret>
    </QuickAccess>
    <AppTitle>
      <span>Autodesk AutoCAD 2020</span>
      <span>CAD练习文件4.dxf.dwg</span>
    </AppTitle>
    <InfoCenter>
      <RightArrow />
      <HelpSearch placeholder="键入关键字或短语" aria-label="搜索帮助" />
      <IconButton aria-label="搜索"><Icon name="binoculars" /></IconButton>
      <SignIn>
        <Icon name="user" />
        登录
      </SignIn>
      <Caret />
      <InfoGroup>
        <IconButton aria-label="应用商店"><Icon name="cart" /></IconButton>
        <IconButton aria-label="共享"><Icon name="share" /></IconButton>
        <Caret />
      </InfoGroup>
      <HelpButton aria-label="帮助"><span>?</span></HelpButton>
      <Caret />
    </InfoCenter>
  </TitleRow>
);

const RibbonTabs = () => (
  <TabRow>
    {ribbonTabs.map((tab) => (
      <RibbonTab key={tab} $active={tab === "布局"}>
        {tab}
      </RibbonTab>
    ))}
    <Minimize aria-label="最小化功能区"><Caret $up /></Minimize>
    <Caret />
  </TabRow>
);

const Tool = ({ icon, label, caret }) => (
  <ToolButton aria-label={label || icon}>
    <Icon name={icon} />
    {label}
    {caret && <Caret />}
  </ToolButton>
);

const BigTool = ({ icon, lines, caret, width }) => (
  <LargeButton $width={width}>
    <Icon name={icon} size={40} />
    <LargeLabel>
      {lines.map((line) => (
        <span key={line}>{line}</span>
      ))}
    </LargeLabel>
    {caret && <Caret />}
  </LargeButton>
);

const Panel = ({ title, width, align, noCaret, launcher, children }) => (
  <PanelBox $width={width}>
    <PanelBody>{children}</PanelBody>
    <PanelTitle $align={align} $launcher={launcher}>
      {title}
      {!noCaret && <Caret $large />}
      {launcher && (
        <Launcher aria-label="特性选项板">
          <Icon name="launcher" size={10} />
        </Launcher>
      )}
    </PanelTitle>
  </PanelBox>
);

const Ribbon = () => (
  <RibbonBar>
    <Panel title="绘图" width={168} align="start">
      <BigTool icon="circle" lines={["圆"]} caret width={62} />
      <BigTool icon="arc" lines={["圆弧"]} caret width={44} />
      <ToolColumn $pad={11}>
        <Tool icon="rect" caret />
        <Tool icon="ellipse" caret />
        <Tool icon="hatch" caret />
      </ToolColumn>
    </Panel>
    <Panel title="修改" width={284}>
      <ToolColumn $pad={7} $width={75}>
        <Tool icon="move" label="移动" />
        <Tool icon="copy" label="复制" />
        <Tool icon="stretch" label="拉伸" />
      </ToolColumn>
      <ToolColumn $pad={7} $width={74}>
        <Tool icon="rotate" label="旋转" />
        <Tool icon="mirror" label="镜像" />
        <Tool icon="scale" label="缩放" />
      </ToolColumn>
      <ToolColumn $pad={7} $width={93}>
        <Tool icon="trim" label="修剪" caret />
        <Tool icon="fillet" label="圆角" caret />
        <Tool icon="array" label="阵列" caret />
      </ToolColumn>
      <ToolColumn $pad={7}>
        <Tool icon="erase" />
        <Tool icon="explode" />
        <Tool icon="offset" />
      </ToolColumn>
    </Panel>
    <Panel title="注释" width={195}>
      <BigTool icon="letterA" lines={["文字"]} caret width={62} />
      <BigTool icon="dimension" lines={["标注"]} width={44} />
      <ToolColumn $pad={6}>
        <Tool icon="linear" label="线性" caret />
        <Tool icon="leader" label="引线" caret />
        <Tool icon="table" label="表格" />
      </ToolColumn>
    </Panel>
    <Panel title="图层" width={316}>
      <BigTool icon="layers" lines={["图层", "特性"]} width={53} />
      <LayerColumn>
        <Combo>
          <Icon name="bulb" />
          <Icon name="sun" />
          <Icon name="vpFreeze" />
          <Icon name="unlock" />
          <Swatch $color="#ffffff" $edge="#111111" $size={16} />
          <ComboSelect aria-label="图层">
            <option>B标注图层</option>
          </ComboSelect>
          <Caret $large />
        </Combo>
        <LayerTools>
          <Tool icon="layerOff" />
          <Tool icon="layerIso" />
          <Tool icon="layerFreeze" />
          <Tool icon="layerLock" />
          <Tool icon="layerCurrent" label="置为当前" />
        </LayerTools>
        <LayerTools>
          <Tool icon="layerOn" />
          <Tool icon="layerUniso" />
          <Tool icon="layerThaw" />
          <Tool icon="layerUnlock" />
          <Tool icon="layerMatch" label="匹配图层" />
        </LayerTools>
      </LayerColumn>
    </Panel>
    <Panel title="块" width={168}>
      <BigTool icon="insert" lines={["插入"]} caret width={52} />
      <ToolColumn $pad={3}>
        <Tool icon="blockCreate" label="创建" />
        <Tool icon="blockEdit" label="编辑" />
        <Tool icon="attrEdit" label="编辑属性" caret />
      </ToolColumn>
    </Panel>
    <Panel title="特性" width={305} launcher>
      <BigTool icon="matchProps" lines={["特性", "匹配"]} width={52} />
      <PropertyGrid>
        <Icon name="wheel" />
        <Combo $slim>
          <Swatch $color="#2b78bb" $edge="#7ea4c4" $size={18} />
          <ComboSelect aria-label="颜色" $pad={6}>
            <option>39,118,187</option>
          </ComboSelect>
          <Caret $large />
        </Combo>
        <Icon name="weights" />
        <Combo $slim>
          <LineSample $weight={4} />
          <ComboSelect aria-label="线宽">
            <option>0.35 毫米</option>
          </ComboSelect>
          <Caret $large />
        </Combo>
        <Icon name="lineTypes" />
        <Combo $slim>
          <LineSample $weight={1} />
          <ComboSelect aria-label="线型">
            <option>ByLayer</option>
          </ComboSelect>
          <Caret $large />
        </Combo>
      </PropertyGrid>
    </Panel>
    <Panel title="组" width={85}>
      <BigTool icon="group" lines={["组"]} width={50} />
      <ToolColumn $pad={5}>
        <Tool icon="ungroup" />
        <Tool icon="groupEdit" />
        <SelectedTool aria-label="组选择">
          <Icon name="groupSelect" />
        </SelectedTool>
      </ToolColumn>
    </Panel>
    <Panel title="实用工具" width={95}>
      <BigTool icon="ruler" lines={["测量"]} caret width={62} />
      <ToolColumn $pad={3}>
        <Tool icon="quickSelect" />
        <Tool icon="selectAll" />
        <Tool icon="calculator" />
      </ToolColumn>
    </Panel>
    <Panel title="剪贴板" width={95} noCaret>
      <BigTool icon="paste" lines={["粘贴"]} caret width={62} />
      <ToolColumn $pad={2}>
        <Tool icon="cut" />
        <Tool icon="clipCopy" />
      </ToolColumn>
    </Panel>
    <LastPanel>
      <PanelTitle $align="tight">视</PanelTitle>
    </LastPanel>
  </RibbonBar>
);

const FileTabs = () => (
  <FileRow>
    <IdleTab />
    <ActiveTab>
      CAD练习文件4.dxf*
      <CloseTab aria-label="关闭">✕</CloseTab>
    </ActiveTab>
    <AddTab aria-label="新图形">+</AddTab>
  </FileRow>
);

const Door = ({ door }) => {
  const [left, right, y, hinge, dir] = door;
  const r = right - left;
  const hx = hinge === "left" ? left : right;
  const fx = hinge === "left" ? right : left;
  const leaf = hinge === "left" ? hx + 1 : hx - 2;
  const sweep = (hinge === "left") === (dir < 0) ? 1 : 0;
  return (
    <>
      <path d={`M${left} ${y}H${right}`} stroke="#6f93a6" />
      <path d={`M${left} ${y - 3}v7M${right} ${y - 3}v7`} stroke="#7fc030" />
      <path d={`M${leaf} ${y + dir * 3}V${y + dir * (r + 1)}`} stroke="#f6f67a" strokeWidth="3" />
      <path
        d={`M${hx} ${y + dir * (r + 1)}A${r} ${r} 0 0 ${sweep} ${fx} ${y + dir * 3}`}
        fill="none"
        stroke="#8a8a8a"
        strokeWidth="1.2"
        shapeRendering="auto"
      />
    </>
  );
};

// Dimension line with a slash at every extension position
const DimLine = ({ at, stops, vertical }) => {
  const ends = [stops[0], stops[stops.length - 1]];
  return (
    <>
      {vertical ? (
        <path d={`M${at} ${ends[0]}V${ends[1]}`} />
      ) : (
        <path d={`M${ends[0]} ${at}H${ends[1]}`} />
      )}
      {stops.map((s) => (
        <path
          key={s}
          strokeWidth="2"
          d={vertical ? `M${at - 3} ${s - 3}l6 6` : `M${s - 3} ${at + 3}l6 -6`}
        />
      ))}
    </>
  );
};

const wallPath = walls.map(([a, b, c, d]) => `M${a} ${b}L${c} ${d}`).join("");

const Drawing = () => (
  <DrawingSvg aria-label="户型图">
    <g transform="translate(0 -240)" shapeRendering="crispEdges">
      <g stroke="#2b2b30" fill="none">
        <path d="M262.500 972V326.500H1245.500V972M1128.500 326V972M1128 443.500H1246" />
        {titleRows.map((row) => (
          <path key={row.bottom} d={`M1128 ${row.bottom + 0.5}H1246`} />
        ))}
      </g>
      <g stroke="#6a6f80" strokeOpacity=".55">
        {range(301.2, 24).map((x) => (
          <path key={x} d={`M${x} 353V972`} />
        ))}
        {range(389.3, 17).map((y) => (
          <path key={y} d={`M286 ${y}H1103`} />
        ))}
      </g>
      <path d="M284.500 972V352.500H1103.500V972M286 355.500H1103" fill="none" stroke="#dc8fcb" />

      <g stroke="#17181a" fill="none">
        <DimLine at={417.5} stops={[489, 894.5]} />
        <DimLine at={442.5} stops={[489, 589, 647.5, 714, 797.5, 894.5]} />
        <path d="M489 411V463M589 436V463M647.500 436V463M714 436V463M797.500 436V463M894.500 411V463" />
        <DimLine at={892.5} stops={[489, 589, 664, 797.5, 877, 894.5]} />
        <DimLine at={917.5} stops={[489, 894.5]} />
        <path d="M489 871V923M589 871V898M664 871V898M797.500 871V898M877 871V898M894.500 871V923" />
        <DimLine vertical at={401.5} stops={[505, 830]} />
        <DimLine vertical at={426.5} stops={[505, 596, 633, 660, 830]} />
        <path d="M396 504.500H448M421 596.500H448M421 632.500H448M421 660.500H448M396 829.500H448" />
        <DimLine vertical at={957.5} stops={[505, 610, 647, 763, 798, 816, 830]} />
        <DimLine vertical at={982.5} stops={[505, 830]} />
        <path d="M936 504.500H988M936 610.500H962M936 646.500H962M936 763.500H962M936 798.500H962M936 816.500H962M936 829.500H988" />
      </g>

      {wallWindows.map(([x1, y, x2]) => (
        <g key={`${x1}-${y}`}>
          <path d={`M${x1} ${y}H${x2}`} stroke="#dcf56a" strokeWidth="2" />
          <path d={`M${x1} ${y - 0.5}H${x2}`} stroke="#8aa83c" />
        </g>
      ))}
      <path d={wallPath} stroke="#1c2a33" strokeWidth="8" strokeLinecap="square" />
      <path d={wallPath} stroke="#eef4f8" strokeWidth="6" strokeLinecap="square" />
      <path d={wallPath} stroke="#8db0c6" strokeWidth="2" />
      <path d="M800.500 501V510" stroke="#1c2a33" />
      <path d="M798.500 503V510" stroke="#c6e86a" strokeWidth="2" />
      {doors.map((door) => (
        <Door key={door.join()} door={door} />
      ))}
      <path d="M894 504h1v1h-1zM664 829h1v1h-1zM797 829h1v1h-1zM877 829h1v1h-1zM894 829h1v1h-1z" fill="#333" />

      <path d="M288.500 294V391M240 342.500H337" stroke="#111" />
      <path d="M278 345h12v12h-12z" fill="none" stroke="#2aa02a" strokeWidth="2" />
    </g>
    <g transform="translate(0 -240)">
      {horizontalTexts.map(([text, x, y]) => (
        <DimText key={`${x}-${y}`} x={x} y={y}>
          {text}
        </DimText>
      ))}
      {verticalTexts.map(([text, x, y]) => (
        <DimText key={`${x}-${y}`} transform={`translate(${x} ${y}) rotate(-90)`}>
          {text}
        </DimText>
      ))}
      {titleRows.map((row) => (
        <g key={row.label}>
          <BlockLabel x="1133" y={row.labelY}>{row.label}</BlockLabel>
          {row.value && <BlockValue x="1188" y={row.valueY}>{row.value}</BlockValue>}
        </g>
      ))}
    </g>
  </DrawingSvg>
);

const Workspace = () => (
  <WorkArea>
    <Canvas>
      <Drawing />
      <NavBar>
        <NavHead>×</NavHead>
        <Icon name="steering" size={28} />
        <NavRule />
        <Icon name="pan" size={30} />
        <Icon name="zoom" size={30} />
        <Caret $pale />
        <NavFoot><Icon name="navOptions" size={10} /></NavFoot>
      </NavBar>
      <History>
        <HistoryLine>
          按 <Mono>Esc</Mono> 或 <Mono>Enter</Mono> 键退出，或单击右键显示快捷菜单。
        </HistoryLine>
        <HistoryLine>指定打印窗口</HistoryLine>
        <HistoryLine>
          指定第一个角点<Mono $tight>: *</Mono>取消<Mono $tight>*</Mono>
        </HistoryLine>
      </History>
      <CommandBar>
        <CommandTools>
          <Grip />
          <PlainButton aria-label="关闭命令行">✕</PlainButton>
          <IconButton aria-label="自定义"><Icon name="wrench" /></IconButton>
        </CommandTools>
        <CommandLabel htmlFor="command">
          <Icon name="prompt" />
          <Caret $large $gray />
          <strong>PLOT</strong>
          <span>指定第一个角点<Mono $tight>:</Mono></span>
        </CommandLabel>
        <CommandInput id="command" />
        <Caret $large $gray $up />
      </CommandBar>
      <Subtitle>看到布局，把它打印出来吧</Subtitle>
    </Canvas>
    <SideStrip>
      <i />
      <i />
      <i />
    </SideStrip>
  </WorkArea>
);

const LayoutTabs = () => (
  <LayoutRow>
    <LayoutTab>布局3</LayoutTab>
    <AddLayout aria-label="新建布局">+</AddLayout>
  </LayoutRow>
);

const Status = ({ icon, on, caret }) => (
  <>
    <StatusButton $on={on} aria-label={icon}>
      <Icon name={icon} />
    </StatusButton>
    {caret && <CaretCell><Caret $large /></CaretCell>}
  </>
);

const StatusBar = () => (
  <StatusRow>
    <StatusGroup>
      <PaperButton>图纸</PaperButton>
    </StatusGroup>
    <StatusGroup>
      <Status icon="ortho" />
      <Status icon="polar" caret />
      <Status icon="iso" caret />
    </StatusGroup>
    <StatusGroup>
      <Status icon="track" on />
      <Status icon="osnap" on caret />
    </StatusGroup>
    <StatusGroup>
      <Status icon="lineweight" on />
    </StatusGroup>
    <StatusGroup>
      <Status icon="annoScale" />
      <Status icon="annoShow" />
      <Status icon="annoAuto" />
    </StatusGroup>
    <StatusGroup>
      <Status icon="gear" caret />
    </StatusGroup>
    <StatusGroup>
      <Status icon="plus" />
    </StatusGroup>
    <StatusGroup>
      <Status icon="isolate" />
    </StatusGroup>
    <StatusGroup $last>
      <Status icon="plot" />
    </StatusGroup>
  </StatusRow>
);

const taskApps = [
  { icon: "cortana" },
  { icon: "record" },
  { icon: "store" },
  { icon: "explorer", open: true },
  { icon: "mail" },
  { icon: "wechat" },
  { icon: "office" },
  { icon: "edge", open: true },
  { icon: "autocad", open: true, active: true },
  { icon: "record", open: true },
];

const Taskbar = () => (
  <TaskRow>
    <TaskSearch placeholder="在这里输入你要搜索的内容" aria-label="搜索" />
    {taskApps.map((app, i) => (
      <TaskButton key={i} $open={app.open} $active={app.active} aria-label={app.icon}>
        <Icon name={app.icon} size={30} />
      </TaskButton>
    ))}
    <Tray>
      <Weather>
        <Icon name="weather" size={24} />
        <span>32°C</span>
        <span>空气优 28</span>
      </Weather>
      <Icon name="chevron" />
      <Icon name="wifi" />
      <Icon name="volume" />
      <b>英</b>
      <InputMode>五</InputMode>
      <Clock>
        <time>11:34</time>
        <span>2021/8/</span>
      </Clock>
    </Tray>
  </TaskRow>
);

//Styled Components
const GlobalStyle = createGlobalStyle`
  * {
    box-sizing: border-box;
  }

  body {
    margin: 0;
    background-color: #20292f;
  }

  button, input, select {
    font: inherit;
    color: inherit;
    border: none;
    background: none;
    padding: 0;
    margin: 0;
    outline: none;
    border-radius: 0;
  }
`;

const Page = styled.div`
  display: flex;
  flex-direction: column;
  height: 100vh;
  overflow: hidden;
  background-color: #20292f;
  color: #e6e9ee;
  font-family: "Noto Sans", "Noto Sans CJK SC", sans-serif;
  font-size: 15px;
  line-height: 20px;
  white-space: nowrap;
`;

const Svg = styled.svg`
  flex: none;
  display: block;
  overflow: visible;
  width: ${(p) => p.$size}px;
  height: ${(p) => p.$size}px;
`;

const caretColor = (p) => {
  if (p.$gray) return "#666a70";
  if (p.$pale) return "#cfcfcf";
  return p.$dim ? "#9aa0a5" : "#dfe5ef";
};

const Caret = styled.span`
  flex: none;
  display: block;
  width: 0;
  height: 0;
  border: ${(p) => (p.$large ? 5 : 4)}px solid transparent;
  border-top-color: ${caretColor};
  border-bottom: none;
  transform: ${(p) => (p.$up ? "rotate(180deg)" : "none")};
`;

const IconButton = styled.button`
  display: flex;
  align-items: center;
`;

const TitleRow = styled.header`
  display: flex;
  flex: none;
  height: 30px;
`;

const QuickAccess = styled.div`
  display: flex;
  align-items: center;
  gap: 10px;
  flex: 0 0 510px;
  padding-bottom: 4px;
  margin-left: -3px;
`;

const CustomizeCaret = styled.span`
  border-top: 2px solid #dfe5ef;
  padding-top: 3px;
  margin-left: -4px;
`;

const AppTitle = styled.div`
  display: flex;
  gap: 16px;
  align-items: center;
  padding: 0 0 2px 3px;
  font-size: 16px;
`;

const InfoCenter = styled.div`
  display: flex;
  align-items: center;
  gap: 11px;
  margin-left: auto;
  padding: 0 73px 4px 0;
`;

const RightArrow = styled.span`
  border: 5px solid transparent;
  border-left-color: #dfe5ef;
  border-right: none;
`;

const HelpSearch = styled.input`
  width: 223px;
  height: 26px;
  margin: 0 -6px 0 -3px;
  padding: 0 4px 2px;
  background-color: #48515f;
  font-size: 14px;
  font-style: italic;

  &::placeholder {
    color: #b5bbc3;
    opacity: 1;
  }
`;

const SignIn = styled.button`
  display: flex;
  align-items: center;
  gap: 6px;
  width: 120px;
`;

const InfoGroup = styled.div`
  display: flex;
  align-items: center;
  gap: 10px;
  padding: 0 12px 0 0;
  border-right: 1px solid #586067;
`;

const HelpButton = styled.button`
  width: 18px;
  height: 18px;
  border-radius: 50%;
  background-color: #dfe3ec;
  color: #2c4878;
  font-weight: 700;
  line-height: 18px;
`;

const MenuBar = styled.nav`
  display: flex;
  flex: none;
  gap: 28px;
  height: 25px;
  padding-top: 2px;
  border-bottom: 1px solid #3c454b;
`;

const MenuItem = styled.button`
  height: 20px;
  color: #b4b9bd;
`;

const TabRow = styled.div`
  display: flex;
  flex: none;
  align-items: center;
  height: 25px;
  padding-left: 14px;
`;

const RibbonTab = styled.button`
  height: 20px;
  padding: 0 12px;
  margin-left: ${(p) => (p.$active ? 2 : 0)}px;
  line-height: 20px;
  border-radius: 1px;
  color: ${(p) => (p.$active ? "#ffffff" : "#b4b9bd")};
  background-color: ${(p) => (p.$active ? "#197394" : "transparent")};
`;

const Minimize = styled.button`
  display: grid;
  place-items: center;
  width: 17px;
  height: 10px;
  margin: 0 6px 0 28px;
  border-radius: 3px;
  background-color: #dfe2e5;

  span {
    border-top-color: #20292f;
    border-width: 3px;
    border-bottom: none;
  }
`;

const RibbonBar = styled.div`
  display: flex;
  flex: none;
  height: 122px;
  background-color: #3b4452;
`;

const PanelBox = styled.section`
  display: flex;
  flex-direction: column;
  flex: 0 0 ${(p) => p.$width}px;
  border-right: 1px solid #242c35;
`;

const LastPanel = styled.section`
  display: flex;
  flex-direction: column;
  justify-content: flex-end;
  flex: 1;
  overflow: hidden;
`;

const PanelBody = styled.div`
  display: flex;
  flex: 1;
  min-height: 0;
`;

const PanelTitle = styled.div`
  display: flex;
  align-items: center;
  justify-content: ${(p) => (p.$align ? "flex-start" : "center")};
  gap: 8px;
  position: relative;
  height: 22px;
  padding-left: ${(p) => (p.$align === "start" ? 12 : p.$align ? 6 : 0)}px;
  padding-right: ${(p) => (p.$launcher ? 16 : 0)}px;
`;

const Launcher = styled.button`
  position: absolute;
  right: 4px;
`;

const LargeButton = styled.button`
  display: flex;
  flex-direction: column;
  align-items: center;
  flex: 0 0 ${(p) => p.$width}px;
  padding-top: 6px;
`;

const LargeLabel = styled.span`
  display: flex;
  flex-direction: column;
  margin: 5px 0 4px;
`;

const ToolColumn = styled.div`
  display: flex;
  flex-direction: column;
  padding-top: 3px;
  padding-left: ${(p) => p.$pad}px;
  flex: ${(p) => (p.$width ? `0 0 ${p.$width}px` : "1")};
`;

const ToolButton = styled.button`
  display: flex;
  align-items: center;
  gap: 7px;
  height: 31px;

  ${Caret} {
    margin: 0 2px 0 5px;
  }
`;

const SelectedTool = styled.button`
  display: grid;
  place-items: center;
  width: 29px;
  height: 29px;
  margin: 1px 0 0 -4px;
  border: 1px solid #6fb5e2;
  background-color: #2c5878;
`;

const LayerColumn = styled.div`
  display: flex;
  flex-direction: column;
  flex: 1;
  padding: 4px 2px 0 0;
`;

const LayerTools = styled.div`
  display: flex;
  gap: 10px;
  padding-left: 3px;
`;

const Combo = styled.label`
  display: flex;
  align-items: center;
  gap: 4px;
  height: ${(p) => (p.$slim ? 27 : 30)}px;
  padding: 0 3px;
  border: 1px solid #2b343f;
  background-color: #4b566a;
`;

const ComboSelect = styled.select`
  flex: 1;
  min-width: 0;
  padding-left: ${(p) => p.$pad || 0}px;
  appearance: none;
`;

const Swatch = styled.span`
  flex: none;
  width: ${(p) => p.$size + 2}px;
  height: ${(p) => p.$size + 2}px;
  margin: 0 4px 0 ${(p) => (p.$size > 16 ? 10 : 0)}px;
  border: 1px solid ${(p) => p.$edge};
  background-color: ${(p) => p.$color};
`;

const PropertyGrid = styled.div`
  display: grid;
  grid-template-columns: 20px 1fr;
  gap: 3px 4px;
  flex: 1;
  align-items: center;
  align-content: start;
  padding: 6px 4px 0 0;
`;

const LineSample = styled.span`
  flex: none;
  width: 80px;
  height: ${(p) => p.$weight}px;
  background-color: #ffffff;
`;

const FileRow = styled.div`
  display: flex;
  flex: none;
  align-items: flex-end;
  height: 38px;
  border-bottom: 5px solid #3d4354;
`;

const IdleTab = styled.span`
  width: 84px;
  height: 26px;
  background-color: #2f3642;
  border-radius: 0 10px 10px 0;
`;

const ActiveTab = styled.div`
  display: flex;
  align-items: center;
  justify-content: space-between;
  height: 27px;
  width: 188px;
  padding: 0 18px 0 13px;
  background-color: #3b4452;
  border-radius: 12px 12px 0 0;
`;

const CloseTab = styled.button`
  font-size: 14px;
  color: #a5abb3;
`;

const AddTab = styled.button`
  width: 24px;
  height: 18px;
  margin: 0 0 4px 8px;
  background-color: #313945;
  border-radius: 4px;
  color: #a5abb3;
  font-size: 19px;
  font-weight: 700;
  line-height: 16px;
`;

const WorkArea = styled.main`
  display: flex;
  flex: 1;
  min-height: 0;
`;

const Canvas = styled.div`
  position: relative;
  flex: 1;
  overflow: hidden;
  background-color: #fdfdfd;
`;

const DrawingSvg = styled.svg`
  display: block;
  width: 100%;
  height: 100%;
`;

const DimText = styled.text`
  font-family: "Liberation Sans Narrow", "Liberation Sans", sans-serif;
  font-size: 11px;
  text-anchor: middle;
  fill: #111111;
`;

const BlockLabel = styled.text`
  font-family: "Noto Sans CJK SC", sans-serif;
  font-size: 10px;
  fill: #111111;
`;

const BlockValue = styled.text`
  font-family: "Liberation Sans", "Noto Sans CJK SC", sans-serif;
  font-size: 13px;
  fill: #701020;
`;

const NavBar = styled.div`
  position: absolute;
  top: 1px;
  right: 2px;
  display: flex;
  flex-direction: column;
  align-items: center;
  gap: 5px;
  width: 44px;
  height: 164px;
  border: 2px solid #c4c4c4;
  border-radius: 5px;
  background-color: #f3f3f3;
`;

const NavHead = styled.div`
  width: 100%;
  height: 13px;
  margin-bottom: 5px;
  padding-right: 4px;
  background-color: #dadada;
  color: #b8b8b8;
  font-size: 14px;
  line-height: 13px;
  text-align: right;
`;

const NavRule = styled.span`
  width: 32px;
  height: 1px;
  background-color: #d4d4d4;
`;

const NavFoot = styled.span`
  align-self: flex-end;
  margin: 2px 3px 0 0;
`;

const History = styled.div`
  position: absolute;
  left: 399px;
  bottom: 40px;
  display: flex;
  flex-direction: column;
  align-items: flex-start;
  gap: 6px;
`;

const HistoryLine = styled.div`
  height: 19px;
  padding: 0 2px;
  border-radius: 3px;
  background-color: rgba(100, 100, 100, 0.8);
  color: #f5f5f5;
  font-family: "Noto Sans CJK SC", sans-serif;
  font-size: 16px;
  line-height: 18px;
`;

const Mono = styled.span`
  margin: 0 ${(p) => (p.$tight ? 0 : 5)}px;
  font-family: "DejaVu Sans Mono", monospace;
  font-size: 14px;
  white-space: pre;
`;

const CommandBar = styled.div`
  position: absolute;
  left: 322px;
  right: 420px;
  bottom: 1px;
  display: flex;
  align-items: center;
  height: 34px;
  padding-right: 5px;
  border: 1px solid #1d1f24;
  border-radius: 3px;
  background-color: #fdfdfd;
  color: #15171a;
`;

const CommandTools = styled.div`
  display: flex;
  align-items: center;
  gap: 13px;
  align-self: stretch;
  width: 70px;
  padding-left: 4px;
  background-color: #2b2d3a;
  color: #e8e8ec;
`;

const Grip = styled.span`
  width: 8px;
  height: 22px;
  margin-right: -8px;
  background-image: radial-gradient(circle, #c9cbd2 1px, transparent 1px);
  background-size: 4px 4px;
`;

const PlainButton = styled.button`
  width: 14px;
  font-size: 17px;
`;

const CommandLabel = styled.label`
  display: flex;
  align-items: center;
  gap: 3px;
  padding-left: 5px;
  font-family: "Noto Sans CJK SC", sans-serif;
  font-size: 16px;

  strong {
    margin: 0 4px 0 2px;
    font-family: "DejaVu Sans Mono", monospace;
    font-size: 14px;
  }
`;

const CommandInput = styled.input`
  flex: 1;
  align-self: stretch;
`;

const Subtitle = styled.div`
  position: absolute;
  left: 477px;
  bottom: 7px;
  color: #ffffff;
  font-family: "Noto Sans CJK SC", sans-serif;
  font-size: 41px;
  line-height: 48px;
  text-shadow: 0 0 6px rgba(120, 120, 120, 0.18);
  pointer-events: none;
`;

const SideStrip = styled.div`
  display: flex;
  flex-direction: column;
  align-items: flex-end;
  gap: 90px;
  width: 9px;
  padding-top: 97px;
  border-left: 4px solid #26323b;
  background-color: #354452;

  i {
    width: 2px;
    height: 2px;
    background-color: #ffffff;
  }
`;

const LayoutRow = styled.div`
  display: flex;
  flex: none;
  height: 27px;
`;

const LayoutTab = styled.button`
  width: 52px;
  height: 23px;
  margin-left: -8px;
  background-color: #3b4452;
  border-radius: 0 0 14px 0;
  color: #ffffff;
  font-weight: 700;
  text-align: left;
`;

const AddLayout = styled.button`
  width: 26px;
  height: 22px;
  margin-left: 8px;
  background-color: #2b343f;
  border-radius: 6px;
  color: #a5abb3;
  font-size: 19px;
  font-weight: 700;
`;

const StatusRow = styled.div`
  display: flex;
  flex: none;
  justify-content: flex-end;
  gap: 3px;
  height: 32px;
`;

const StatusGroup = styled.div`
  display: flex;
  gap: 1px;
  height: 30px;
  padding: 0 ${(p) => (p.$last ? "3px 0 4px" : 0)};
  background-color: #3b4452;
`;

const StatusButton = styled.button`
  display: grid;
  place-items: center;
  width: 29px;
  height: 30px;
  background-color: ${(p) => (p.$on ? "#5f8db8" : "transparent")};
`;

const CaretCell = styled.span`
  display: grid;
  place-items: center;
  width: 19px;
`;

const PaperButton = styled.button`
  width: 34px;
  padding-left: 3px;
  color: #ffffff;
`;

const TaskRow = styled.footer`
  display: flex;
  flex: none;
  height: 50px;
  background: linear-gradient(
    90deg,
    #2d2d2f 0%,
    #2d2d2f 40%,
    #1b1f27 47%,
    #1d2127 57%,
    #39342f 62%,
    #37332f 68%,
    #1c1f26 74%,
    #1e2930 82%,
    #2b3234 91%,
    #1c1d22 97%,
    #1c1d22 100%
  );
`;

const TaskSearch = styled.input`
  flex: 0 1 394px;
  padding: 0 14px;
  background-color: #f0f0f0;
  border-bottom: 1px solid #b5b5b5;
  font-size: 19px;

  &::placeholder {
    color: #222222;
    opacity: 1;
  }
`;

const TaskButton = styled.button`
  display: grid;
  place-items: center;
  width: 62px;
  border-bottom: 3px solid ${(p) => (p.$open ? "#b5dcee" : "transparent")};
  border-top: 3px solid ${(p) => (p.$active ? "#474c52" : "transparent")};
  background-color: ${(p) => (p.$active ? "#474c52" : "transparent")};
`;

const Tray = styled.div`
  display: flex;
  align-items: center;
  gap: 10px;
  margin-left: auto;
  font-size: 18px;
`;

const Weather = styled.div`
  display: flex;
  align-items: center;
  gap: 12px;
  margin-right: 8px;
`;

const InputMode = styled.span`
  width: 18px;
  height: 18px;
  margin: 0 13px 0 9px;
  background-color: #ffffff;
  color: #111111;
  font-size: 16px;
  line-height: 16px;
  text-align: center;
`;

const Clock = styled.div`
  display: flex;
  flex-direction: column;
  width: 54px;
  overflow: hidden;
  font-size: 16px;
  line-height: 24px;

  time {
    padding-left: 18px;
  }
`;
